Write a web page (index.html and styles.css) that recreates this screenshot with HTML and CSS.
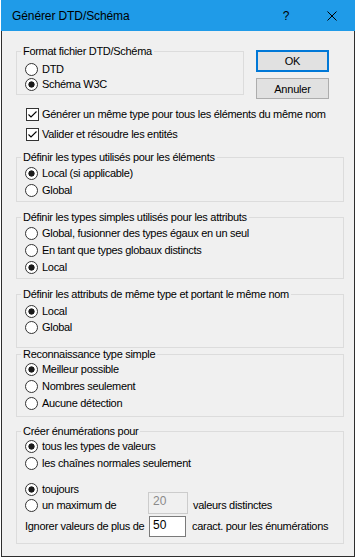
FILE: index.html
```html
<!DOCTYPE html>
<html lang="fr">
<head>
<meta charset="utf-8">
<title>Générer DTD/Schéma</title>
<link rel="stylesheet" href="styles.css">
</head>
<body>
<div class="window">
  <div class="titlebar">
    <span class="title">Générer DTD/Schéma</span>
    <span class="help">?</span>
    <span class="close"><svg width="10" height="10" viewBox="0 0 10 10"><path d="M0.5 0.5L9.5 9.5M9.5 0.5L0.5 9.5" stroke="#000" stroke-width="1" fill="none"/></svg></span>
  </div>
  <div class="client">
    <div class="top">
      <fieldset class="group g1">
        <legend>Format fichier DTD/Schéma</legend>
        <div class="rows">
          <label class="row h15"><span class="radio"></span><span class="lbl">DTD</span></label>
          <label class="row h15"><span class="radio on"></span><span class="lbl">Schéma W3C</span></label>
        </div>
      </fieldset>
      <div class="buttons">
        <button class="btn default">OK</button>
        <button class="btn">Annuler</button>
      </div>
    </div>

    <div class="checks">
      <label class="crow"><span class="cb"><svg width="13" height="13" viewBox="0 0 13 13"><rect x="0.5" y="0.5" width="12" height="12" fill="#fff" stroke="#333"/><path d="M2.5 6.5L5 9L10.5 3.5" stroke="#000" stroke-width="1.1" fill="none"/></svg></span><span class="lbl">Générer un même type pour tous les éléments du même nom</span></label>
      <label class="crow"><span class="cb"><svg width="13" height="13" viewBox="0 0 13 13"><rect x="0.5" y="0.5" width="12" height="12" fill="#fff" stroke="#333"/><path d="M2.5 6.5L5 9L10.5 3.5" stroke="#000" stroke-width="1.1" fill="none"/></svg></span><span class="lbl">Valider et résoudre les entités</span></label>
    </div>

    <fieldset class="group g2">
      <legend>Définir les types utilisés pour les éléments</legend>
      <div class="rows">
        <label class="row h17"><span class="radio on"></span><span class="lbl">Local (si applicable)</span></label>
        <label class="row h17"><span class="radio"></span><span class="lbl">Global</span></label>
      </div>
    </fieldset>

    <fieldset class="group g3">
      <legend>Définir les types simples utilisés pour les attributs</legend>
      <div class="rows">
        <label class="row h17"><span class="radio"></span><span class="lbl">Global, fusionner des types égaux en un seul</span></label>
        <label class="row h17"><span class="radio"></span><span class="lbl">En tant que types globaux distincts</span></label>
        <label class="row h17"><span class="radio on"></span><span class="lbl">Local</span></label>
      </div>
    </fieldset>

    <fieldset class="group g4">
      <legend>Définir les attributs de même type et portant le même nom</legend>
      <div class="rows">
        <label class="row h16"><span class="radio on"></span><span class="lbl">Local</span></label>
        <label class="row h16"><span class="radio"></span><span class="lbl">Global</span></label>
      </div>
    </fieldset>

    <fieldset class="group g5">
      <legend>Reconnaissance type simple</legend>
      <div class="rows">
        <label class="row h17"><span class="radio on"></span><span class="lbl">Meilleur possible</span></label>
        <label class="row h17"><span class="radio"></span><span class="lbl">Nombres seulement</span></label>
        <label class="row h17"><span class="radio"></span><span class="lbl">Aucune détection</span></label>
      </div>
    </fieldset>

    <fieldset class="group g6">
      <legend>Créer énumérations pour</legend>
      <div class="rows">
        <label class="row h17"><span class="radio on"></span><span class="lbl">tous les types de valeurs</span></label>
        <label class="row h17"><span class="radio"></span><span class="lbl">les chaînes normales seulement</span></label>
        <label class="row h16 sep"><span class="radio on"></span><span class="lbl">toujours</span></label>
        <div class="row h16">
          <span class="radio"></span><span class="lbl w-max">un maximum de</span>
          <span class="textbox disabled tb20">20</span>
          <span class="after a1">valeurs distinctes</span>
        </div>
        <div class="row h22 ign">
          <span class="lbl w-ign">Ignorer valeurs de plus de</span>
          <span class="textbox tb50">50</span>
          <span class="after a2">caract. pour les énumérations</span>
        </div>
      </div>
    </fieldset>
  </div>
</div>
</body>
</html>
```

FILE: styles.css
```css
html, body {
  margin: 0;
  padding: 0;
  background: #ffffff;
}

body {
  font-family: "Liberation Sans", Arial, sans-serif;
  font-size: 11px;
  letter-spacing: -0.3px;
  color: #000;
}

.window {
  width: 354px;
  margin-left: 1px;
}

.titlebar {
  height: 31px;
  background: #1f9be8;
  display: flex;
  align-items: center;
  padding-right: 8px;
}

.title {
  margin-left: 11px;
  font-size: 12px;
  letter-spacing: -0.1px;
  flex: 1;
  line-height: 14px;
}

.help {
  width: 20px;
  text-align: center;
  font-size: 12px;
  line-height: 14px;
  margin-right: 21px;
}

.close {
  width: 30px;
  height: 10px;
  display: flex;
  justify-content: center;
  align-items: center;
}

.close svg {
  display: block;
}

.client {
  box-sizing: border-box;
  height: 526px;
  background: #f0f0f0;
  border: 1px solid #2e2e2e;
  border-top: none;
  padding: 0 10px 0 14px;
  overflow: hidden;
}

.top {
  display: flex;
  align-items: flex-start;
  height: 50px;
  margin-top: 14px;
}

.group {
  border: 1px solid #dcdcdc;
  margin: 0;
  padding: 0;
  min-inline-size: 0;
}

.group legend {
  padding: 0 2px;
  margin-left: 4px;
  line-height: 12px;
  height: 12px;
  font-size: 11px;
}

.rows {
  display: flex;
  flex-direction: column;
  padding-left: 8px;
}

.g1 {
  width: 228px;
  box-sizing: border-box;
}
.g1 .rows { padding-top: 5px; padding-bottom: 2px; }

.g2 { margin-top: 8px; }
.g2 .rows { padding-top: 2px; padding-bottom: 2px; }

.g3 { margin-top: 9px; }
.g3 .rows { padding-top: 2px; padding-bottom: 2px; }

.g4 { margin-top: 9px; }
.g4 .rows { padding-top: 3px; padding-bottom: 12px; }

.g5 { margin-top: 0; }
.g5 .rows { padding-top: 1px; padding-bottom: 4px; }

.g6 { margin-top: 8px; }
.g6 .rows { padding-top: 1px; padding-bottom: 6px; }

.row {
  display: flex;
  align-items: center;
  white-space: nowrap;
}

.h15 { height: 15px; }
.h16 { height: 16px; }
.h17 { height: 17px; }
.h22 { height: 22px; }

.sep { margin-top: 9px; }
.ign { margin-top: 2px; }

.radio {
  box-sizing: border-box;
  width: 13px;
  height: 13px;
  border: 1px solid #333;
  border-radius: 50%;
  background: #fff;
  flex: none;
  margin-right: 4px;
}

.radio.on {
  background: radial-gradient(circle at center, #1a1a1a 0, #1a1a1a 2.8px, #fff 3.4px);
}

.lbl {
  line-height: 13px;
}

.buttons {
  display: flex;
  flex-direction: column;
  margin-left: 12px;
  margin-top: 5px;
}

.btn {
  box-sizing: border-box;
  width: 73px;
  height: 21px;
  background: #e1e1e1;
  border: 1px solid #adadad;
  font-family: "Liberation Sans", Arial, sans-serif;
  font-size: 11px;
  letter-spacing: -0.2px;
  color: #000;
  padding: 0;
  margin: 0;
  line-height: 14px;
}

.btn.default {
  height: 22px;
  border: 2px solid #0078d7;
  margin-bottom: 6px;
}

.checks {
  display: flex;
  flex-direction: column;
  gap: 2px;
  margin-top: 10px;
  padding-left: 10px;
}

.crow {
  display: flex;
  align-items: center;
  height: 18px;
  white-space: nowrap;
}

.cb {
  width: 13px;
  height: 13px;
  margin-right: 3px;
  flex: none;
}

.cb svg { display: block; }

.w-max {
  width: 106px;
  flex: none;
}

.w-ign {
  width: 124px;
  flex: none;
}

.textbox {
  box-sizing: border-box;
  display: block;
  flex: none;
  padding: 2px 0 0 4px;
  line-height: 13px;
  font-size: 12px;
  letter-spacing: 0;
}

.tb20 {
  width: 40px;
  height: 22px;
  border: 1px solid #cccccc;
  background: #f0f0f0;
  color: #8a8a8a;
  margin-bottom: 4px;
}

.tb50 {
  width: 37px;
  height: 21px;
  border: 1px solid #7a7a7a;
  background: #fff;
  color: #000;
  padding-left: 3px;
}

.a1 { margin-left: 5px; }
.a2 { margin-left: 6px; }
```
